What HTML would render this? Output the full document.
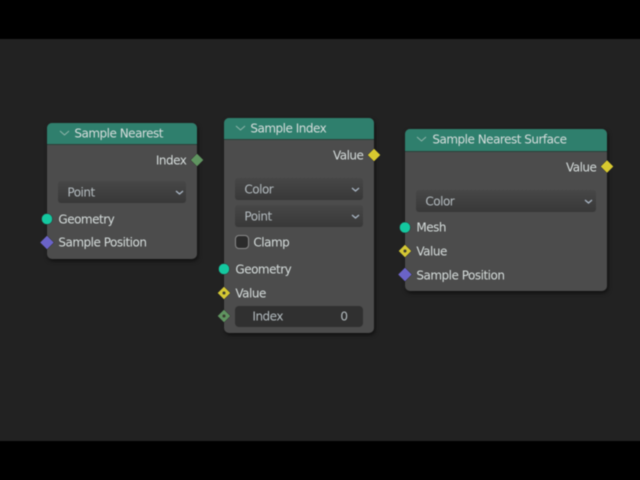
<!DOCTYPE html>
<html><head><meta charset="utf-8"><style>
html,body{margin:0;padding:0;width:640px;height:480px;overflow:hidden;background:#000}
#w{position:absolute;left:0;top:0;width:640px;height:480px;filter:blur(.45px)}
#v{position:absolute;left:-10px;top:39px;width:660px;height:402px;background:#222}
.n{position:absolute;background:#4c4c4c;border-radius:5px;box-shadow:1px 2px 4px rgba(0,0,0,.6)}
.h{position:absolute;left:0;top:0;right:0;background:#2f7f6d;border-radius:5px 5px 0 0;border-bottom:1px solid #2c3f3a;box-sizing:border-box}
.t{position:absolute;font-family:"DejaVu Sans",sans-serif;font-size:12px;line-height:16px;color:#d6dddc;white-space:nowrap;letter-spacing:-.5px;transform:translate(.4px,.5px)}
.r{text-align:right}
.d{position:absolute;background:linear-gradient(#474747,#383838);border-radius:3px;height:22px}
.f{position:absolute;background:#303030;border-radius:4px}
svg{position:absolute;left:0;top:0}
</style></head><body><div id="w">
<div id="v"></div>

<div class="n" style="left:47px;top:123px;width:150px;height:136px"><div class="h" style="height:22px"></div></div>
<div class="n" style="left:224px;top:118px;width:150px;height:215px"><div class="h" style="height:22px"></div></div>
<div class="n" style="left:405px;top:129px;width:202px;height:162px"><div class="h" style="height:23px"></div></div>

<div class="d" style="left:58px;top:181px;width:128px"></div>
<div class="d" style="left:235px;top:178px;width:128px"></div>
<div class="d" style="left:235px;top:205px;width:128px"></div>
<div class="d" style="left:416px;top:190px;width:180px"></div>
<div class="f" style="left:235px;top:306px;width:128px;height:21px"></div>
<div style="position:absolute;left:235px;top:235px;width:14px;height:14px;box-sizing:border-box;background:#2b2b2b;border:1px solid #8a8a8a;border-radius:4px"></div>

<div class="t" style="left:74px;top:125px">Sample Nearest</div>
<div class="t" style="left:250px;top:120px">Sample Index</div>
<div class="t" style="left:432px;top:131px">Sample Nearest Surface</div>

<div class="t r" style="right:454px;top:152px">Index</div>
<div class="t" style="left:67px;top:184px;color:#b4bcc0">Point</div>
<div class="t" style="left:58px;top:211px">Geometry</div>
<div class="t" style="left:58px;top:234px">Sample Position</div>

<div class="t r" style="right:277px;top:147px">Value</div>
<div class="t" style="left:244px;top:181px;color:#b4bcc0">Color</div>
<div class="t" style="left:244px;top:208px;color:#b4bcc0">Point</div>
<div class="t" style="left:253px;top:234px">Clamp</div>
<div class="t" style="left:235px;top:261px">Geometry</div>
<div class="t" style="left:235px;top:285px">Value</div>
<div class="t" style="left:252px;top:308px;color:#b4bcc0">Index</div>
<div class="t" style="left:340px;top:308px;color:#b4bcc0">0</div>

<div class="t r" style="right:44px;top:159px">Value</div>
<div class="t" style="left:425px;top:193px;color:#b4bcc0">Color</div>
<div class="t" style="left:416px;top:219px">Mesh</div>
<div class="t" style="left:416px;top:243px">Value</div>
<div class="t" style="left:416px;top:267px">Sample Position</div>

<svg width="640" height="480" viewBox="0 0 640 480">
<g fill="none" stroke="#8fb5aa" stroke-width="1">
<path d="M60 131l4.500 4 4.500-4"/><path d="M236 126l4.500 4 4.500-4"/><path d="M417 137l4.500 4 4.500-4"/>
</g>
<g fill="none" stroke="#a9b6c4" stroke-width="1.300">
<path d="M176 191l3.500 3 3.500-3"/><path d="M352 188l3.500 3 3.500-3"/><path d="M352 215l3.500 3 3.500-3"/><path d="M585 200l3.500 3 3.500-3"/>
</g>
<g stroke="#2a2a2a" stroke-width=".5">
<path d="M197 153.500l6.500 6.500-6.500 6.500-6.500-6.500z" fill="#5f9460"/>
<circle cx="47" cy="219" r="5.500" fill="#14c8a0"/>
<path d="M47 235.500l7 7-7 7-7-7z" fill="#6a63c8"/>
<path d="M374 148.500l6.500 6.500-6.500 6.500-6.500-6.500z" fill="#d8c92f"/>
<circle cx="224" cy="269" r="5.500" fill="#14c8a0"/>
<path d="M224 286.500l6.500 6.500-6.500 6.500-6.500-6.500z" fill="#d4c733"/>
<path d="M224 309.500l6.500 6.500-6.500 6.500-6.500-6.500z" fill="#5f9460"/>
<path d="M607 160l6.500 6.500-6.500 6.500-6.500-6.500z" fill="#d8c92f"/>
<circle cx="405" cy="227.500" r="5.500" fill="#14c8a0"/>
<path d="M405 244.500l6.500 6.500-6.500 6.500-6.500-6.500z" fill="#d4c733"/>
<path d="M405 267.500l7 7-7 7-7-7z" fill="#6a63c8"/>
</g>
<g fill="#3a3a30"><circle cx="224" cy="293" r="1.500"/><circle cx="224" cy="316" r="1.500"/><circle cx="405" cy="251" r="1.500"/></g>
</svg>
</div></body></html>
